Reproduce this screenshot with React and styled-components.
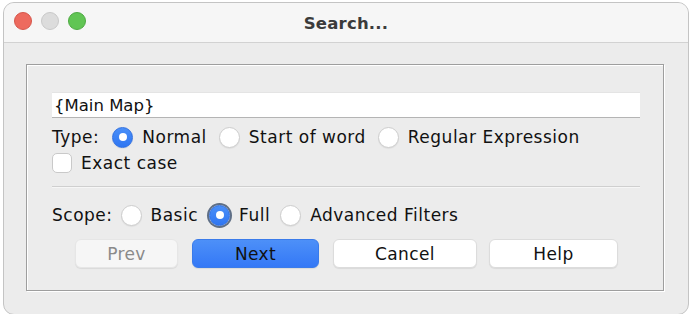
import React from "react";
import styled, { createGlobalStyle } from "styled-components";

const GlobalStyle = createGlobalStyle`
  html, body {
    margin: 0;
    padding: 0;
    background: #ffffff;
    overflow: hidden;
  }
  body {
    font-family: "DejaVu Sans", "Liberation Sans", sans-serif;
    color: #1a1a1a;
  }
`;

const Desktop = styled.div`
  width: 690px;
  height: 314px;
  background: #ffffff;
  padding: 2px 1px 0 3px;
  box-sizing: border-box;
`;

const Window = styled.div`
  height: 313px;
  box-sizing: border-box;
  background: #ececec;
  border: 1px solid #c4c4c4;
  border-radius: 11px;
  overflow: hidden;
  display: flex;
  flex-direction: column;
`;

const TitleBar = styled.div`
  height: 39px;
  flex: none;
  background: #f6f6f6;
  border-bottom: 1px solid #d2d2d2;
  position: relative;
  display: flex;
  align-items: center;
  justify-content: center;
`;

const Lights = styled.div`
  position: absolute;
  left: 10px;
  top: 9px;
  display: flex;
  gap: 9px;
`;

const Light = styled.span`
  width: 18px;
  height: 18px;
  border-radius: 50%;
  box-sizing: border-box;
  background: ${(p) => p.$color};
  border: 1px solid ${(p) => p.$edge};
`;

const Title = styled.div`
  font-size: 16.5px;
  font-weight: bold;
  color: #3b3b3b;
  margin-top: 1px;
  letter-spacing: 0.2px;
`;

const Body = styled.div`
  padding: 21px 24px 0 22px;
`;

const Panel = styled.div`
  height: 227px;
  box-sizing: border-box;
  border: 1px solid #9e9e9e;
  box-shadow: inset 1px 1px 0 #ffffff, 1px 1px 0 #ffffff;
  padding: 27px 23px 0 25px;
  display: flex;
  flex-direction: column;
`;

const Field = styled.div`
  height: 26px;
  box-sizing: border-box;
  background: #ffffff;
  border-top: 1px solid #e4e4e4;
  border-bottom: 1px solid #b4b4b4;
  display: flex;
  align-items: center;
  padding-left: 2px;
  font-size: 16.5px;
  color: #111;
`;

const Row = styled.div`
  display: flex;
  align-items: center;
  height: ${(p) => p.$h}px;
  margin-top: ${(p) => p.$mt || 0}px;
  font-size: 17px;
  letter-spacing: 0.5px;
  color: #111;
  white-space: nowrap;
`;

const Label = styled.span`
  margin-right: ${(p) => p.$gap || 13}px;
`;

const Option = styled.span`
  display: flex;
  align-items: center;
  margin-right: ${(p) => p.$gap || 12}px;
`;

const Radio = styled.span`
  width: 21px;
  height: 21px;
  box-sizing: border-box;
  border-radius: 50%;
  margin-right: 9px;
  display: flex;
  align-items: center;
  justify-content: center;
  background: ${(p) => (p.$on ? "linear-gradient(#4a8ff8, #2f76f2)" : "#ffffff")};
  border: 1px solid ${(p) => (p.$on ? "#2f6fe0" : "#cdcdcd")};
  box-shadow: ${(p) =>
    p.$focus ? "0 0 0 2px #5f6f86" : "0 1px 1px rgba(0,0,0,0.06)"};

  &::after {
    content: "";
    display: ${(p) => (p.$on ? "block" : "none")};
    width: 8px;
    height: 8px;
    border-radius: 50%;
    background: #ffffff;
  }
`;

const Check = styled.span`
  width: 20px;
  height: 20px;
  box-sizing: border-box;
  border-radius: 5px;
  background: #ffffff;
  border: 1px solid #c9c9c9;
  margin-right: 9px;
`;

const Separator = styled.div`
  height: 1px;
  background: #cfcfcf;
  border-bottom: 1px solid #f6f6f6;
  margin-top: 12px;
`;

const Buttons = styled.div`
  display: flex;
  margin-top: 11px;
  margin-left: 23px;
  gap: 14px;
`;

const Button = styled.button`
  width: ${(p) => p.$w}px;
  height: 29px;
  box-sizing: border-box;
  border-radius: 6px;
  font-family: "DejaVu Sans", "Liberation Sans", sans-serif;
  font-size: 17px;
  letter-spacing: 0.4px;
  padding: 0;
  margin-left: ${(p) => p.$ml || 0}px;
  cursor: default;
  color: ${(p) => (p.$kind === "off" ? "#8a8a8a" : "#111111")};
  background: ${(p) =>
    p.$kind === "primary"
      ? "linear-gradient(#4d90f8, #3478f6)"
      : p.$kind === "off"
      ? "#f6f6f6"
      : "#ffffff"};
  border: 1px solid
    ${(p) =>
      p.$kind === "primary" ? "#3a7bea" : p.$kind === "off" ? "#e6e6e6" : "#dcdcdc"};
  box-shadow: 0 1px 1px rgba(0, 0, 0, 0.08);
`;

export default function App() {
  return (
    <>
      <GlobalStyle />
      <Desktop>
        <Window>
          <TitleBar>
            <Lights>
              <Light $color="#ed6a5e" $edge="#d5574c" />
              <Light $color="#dcdcdc" $edge="#c8c8c8" />
              <Light $color="#61c554" $edge="#4ea943" />
            </Lights>
            <Title>Search...</Title>
          </TitleBar>
          <Body>
            <Panel>
              <Field>{"{Main Map}"}</Field>
              <Row $h={30} $mt={4}>
                <Label>Type:</Label>
                <Option>
                  <Radio $on />
                  Normal
                </Option>
                <Option>
                  <Radio />
                  Start of word
                </Option>
                <Option>
                  <Radio />
                  Regular Expression
                </Option>
              </Row>
              <Row $h={22}>
                <Check />
                Exact case
              </Row>
              <Separator />
              <Row $h={26} $mt={14}>
                <Label $gap={8}>Scope:</Label>
                <Option $gap={11}>
                  <Radio />
                  Basic
                </Option>
                <Option $gap={10}>
                  <Radio $on $focus />
                  Full
                </Option>
                <Option>
                  <Radio />
                  Advanced Filters
                </Option>
              </Row>
              <Buttons>
                <Button $w={103} $kind="off">Prev</Button>
                <Button $w={127} $kind="primary">Next</Button>
                <Button $w={144}>Cancel</Button>
                <Button $w={129} $ml={-2}>Help</Button>
              </Buttons>
            </Panel>
          </Body>
        </Window>
      </Desktop>
    </>
  );
}
